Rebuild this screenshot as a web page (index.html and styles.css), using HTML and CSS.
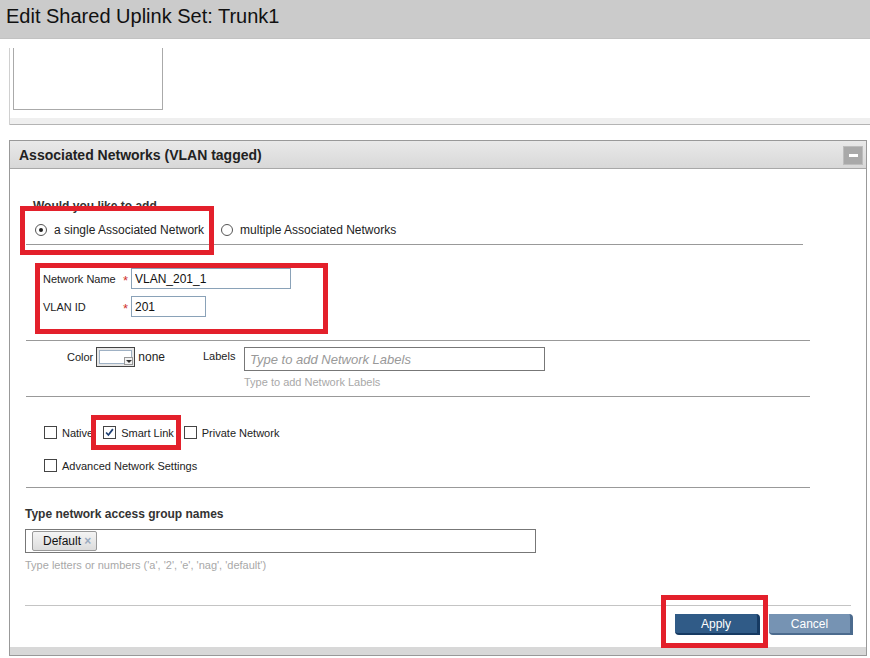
FILE: index.html
```html
<!DOCTYPE html>
<html lang="en">

<head>
    <meta charset="UTF-8">
    <meta name="viewport" content="width=device-width, initial-scale=1.0">
    <title>Edit Shared Uplink Set</title>
    <link rel="stylesheet" href="styles.css">
</head>

<body>

    <div class="page-header">Edit Shared Uplink Set: Trunk1</div>

    <div class="top-panel">
        <div class="preview"></div>
        <div class="strip"></div>
    </div>

    <div class="panel">
        <div class="panel-header">
            <h3>Associated Networks (VLAN tagged)</h3>
            <button class="collapse" type="button"><span></span></button>
        </div>

        <div class="add-choice">
            <div class="add-title">Would you like to add...</div>
            <div class="radio-row">
                <label class="radio"><span class="dot checked"></span>a single Associated Network</label>
                <label class="radio"><span class="dot"></span>multiple Associated Networks</label>
            </div>
        </div>
        <div class="rule short"></div>

        <div class="fields">
            <div class="field-row">
                <label for="netname">Network Name</label>
                <span class="req">*</span>
                <input type="text" id="netname" class="name-input" value="VLAN_201_1">
            </div>
            <div class="field-row">
                <label for="vlanid">VLAN ID</label>
                <span class="req">*</span>
                <input type="text" id="vlanid" class="id-input" value="201">
            </div>
        </div>
        <div class="rule"></div>

        <div class="color-row">
            <div class="color-field">
                <span>Color</span>
                <span class="swatch"><span class="swatch-inner"></span><span class="swatch-arrow"></span></span>
                <span class="none">none</span>
            </div>
            <div class="labels-field">
                <span class="labels-label">Labels</span>
                <div>
                    <input type="text" class="labels-input" placeholder="Type to add Network Labels">
                    <div class="hint">Type to add Network Labels</div>
                </div>
            </div>
        </div>
        <div class="rule"></div>

        <div class="checks">
            <div class="check-row">
                <label class="check"><span class="box"></span>Native</label>
                <label class="check"><span class="box checked"><svg viewBox="0 0 13 13" width="11" height="11"><path d="M2.5 6.5 L5.2 9.5 L10.5 2.5" fill="none" stroke="#1d3f73" stroke-width="2"/></svg></span>Smart Link</label>
                <label class="check"><span class="box"></span>Private Network</label>
            </div>
            <div class="check-row">
                <label class="check"><span class="box"></span>Advanced Network Settings</label>
            </div>
        </div>
        <div class="rule"></div>

        <div class="groups">
            <div class="groups-title">Type network access group names</div>
            <div class="tag-input">
                <span class="tag">Default <span class="tag-x">&times;</span></span>
            </div>
            <div class="hint">Type letters or numbers ('a', '2', 'e', 'nag', 'default')</div>
        </div>
        <div class="rule wide"></div>

        <div class="actions">
            <button type="button" class="btn apply">Apply</button>
            <button type="button" class="btn cancel">Cancel</button>
        </div>

        <div class="panel-foot"></div>
    </div>

    <!-- annotation boxes -->
    <div class="mark mark-add"></div>
    <div class="mark mark-fields"></div>
    <div class="mark mark-smart"></div>
    <div class="mark mark-apply"></div>

</body>

</html>
```

FILE: styles.css
```css
* {
    box-sizing: border-box;
    margin: 0;
    padding: 0;
    font-family: "Liberation Sans", Arial, sans-serif;
}

body {
    width: 870px;
    height: 658px;
    background-color: #fff;
    color: #222;
    position: relative;
    overflow: hidden;
}

.page-header {
    height: 39px;
    padding: 5px 0 0 6px;
    background-color: #cbcbcb;
    border-bottom: 1px solid #c2c2c2;
    font-size: 20px;
    color: #111;
}

.top-panel {
    margin: 9px 0 0 9px;
    border-left: 1px solid #d0d0d0;
}

.preview {
    margin-left: 3px;
    width: 150px;
    height: 62px;
    border: 1px solid #aaa;
    border-top: none;
}

.strip {
    margin-top: 8px;
    height: 7px;
    background-color: #efefef;
    border-bottom: 1px solid #b4b4b4;
}

.panel {
    margin: 15px 0 0 9px;
    width: 858px;
    height: 516px;
    border: 1px solid #999;
}

.panel-header {
    height: 28px;
    padding: 0 3px 0 9px;
    display: flex;
    align-items: center;
    justify-content: space-between;
    background: linear-gradient(#e9e9e9, #d8d8d8);
    border-bottom: 1px solid #a8a8a8;
}

.panel-header h3 {
    font-size: 14px;
    color: #222;
}

.collapse {
    width: 20px;
    height: 19px;
    margin-top: 2px;
    background-color: #a9a9a9;
    border: 1px solid #bdbdbd;
    display: flex;
    align-items: center;
    justify-content: center;
}

.collapse span {
    width: 9px;
    height: 3px;
    background-color: #fff;
}

.add-choice {
    padding: 30px 0 0 23px;
}

.add-title {
    height: 14px;
    line-height: 14px;
    font-size: 12px;
    font-weight: bold;
    color: #333;
}

.radio-row {
    margin-top: 10px;
    height: 14px;
    display: flex;
    gap: 15px;
}

.radio {
    display: flex;
    align-items: center;
    font-size: 12px;
    line-height: 14px;
    color: #222;
}

.dot {
    width: 12px;
    height: 12px;
    margin: 0 7px 0 2px;
    border: 1px solid #555;
    border-radius: 50%;
    background-color: #fff;
    position: relative;
}

.dot.checked::after {
    content: "";
    position: absolute;
    left: 3px;
    top: 3px;
    width: 4px;
    height: 4px;
    border-radius: 50%;
    background-color: #222;
}

.rule {
    margin-left: 16px;
    width: 784px;
    height: 1px;
    background-color: #999;
}

.rule.short {
    margin-top: 7px;
    width: 777px;
}

.rule.wide {
    margin-left: 15px;
    width: 826px;
    background-color: #c4c4c4;
}

.fields {
    padding: 23px 0 23px 33px;
    display: flex;
    flex-direction: column;
    gap: 7px;
}

.field-row {
    display: flex;
    align-items: center;
    height: 21px;
}

.field-row label {
    width: 80px;
    font-size: 11px;
    color: #222;
}

.req {
    width: 8px;
    font-size: 13px;
    line-height: 10px;
    color: #d0332d;
    padding-top: 5px;
}

.field-row input {
    height: 21px;
    padding: 0 3px;
    border: 1px solid #8aa2b8;
    font-size: 12px;
    color: #111;
}

.name-input {
    width: 160px;
}

.id-input {
    width: 75px;
}

.color-row {
    padding: 6px 0 0 57px;
    height: 55px;
    display: flex;
}

.color-field {
    width: 136px;
    height: 20px;
    display: flex;
    align-items: center;
    font-size: 11px;
}

.swatch {
    width: 39px;
    height: 20px;
    margin: 0 3px 0 3px;
    border: 1px solid #444;
    background-color: #e6e6e6;
    position: relative;
}

.swatch-inner {
    position: absolute;
    left: 2px;
    top: 2px;
    width: 33px;
    height: 14px;
    background-color: #fff;
    border: 1px solid #9fb1c4;
}

.swatch-arrow {
    position: absolute;
    right: 1px;
    bottom: 1px;
    width: 9px;
    height: 8px;
    background-color: #f2f2f2;
    border: 1px solid #999;
}

.swatch-arrow::after {
    content: "";
    position: absolute;
    left: 1px;
    top: 2px;
    border-left: 3px solid transparent;
    border-right: 3px solid transparent;
    border-top: 3px solid #333;
}

.none {
    font-size: 12px;
}

.labels-field {
    display: flex;
}

.labels-label {
    width: 41px;
    height: 20px;
    line-height: 18px;
    font-size: 11px;
}

.labels-input {
    width: 301px;
    height: 24px;
    padding: 0 5px;
    border: 1px solid #777;
    font-size: 13px;
}

.labels-input::placeholder {
    font-style: italic;
    color: #999;
}

.hint {
    margin-top: 5px;
    font-size: 11px;
    line-height: 12px;
    color: #a8a8a8;
}

.checks {
    padding: 29px 0 15px 34px;
    display: flex;
    flex-direction: column;
    gap: 20px;
}

.check-row {
    display: flex;
    height: 13px;
}

.check {
    display: flex;
    align-items: center;
    font-size: 11px;
    color: #222;
    margin-right: 10px;
}

.box {
    width: 13px;
    height: 13px;
    margin-right: 5px;
    border: 1px solid #444;
    background-color: #fff;
    display: flex;
    align-items: center;
    justify-content: center;
}

.groups {
    padding: 19px 0 0 15px;
    height: 117px;
}

.groups-title {
    height: 14px;
    line-height: 14px;
    font-size: 12px;
    font-weight: bold;
    color: #333;
}

.tag-input {
    margin-top: 8px;
    width: 511px;
    height: 24px;
    padding: 1px 0 0 6px;
    border: 1px solid #777;
}

.tag {
    display: inline-block;
    height: 20px;
    width: 65px;
    padding-left: 10px;
    line-height: 18px;
    font-size: 12px;
    color: #111;
    background: linear-gradient(#f4f4f4, #dcdcdc);
    border: 1px solid #999;
    border-radius: 2px;
}

.tag-x {
    color: #9aabc0;
    font-weight: bold;
}

.groups .hint {
    margin-top: 6px;
}

.actions {
    margin-top: 8px;
    padding-right: 13px;
    display: flex;
    justify-content: flex-end;
    gap: 9px;
}

.btn {
    width: 85px;
    height: 21px;
    border: none;
    border-right: 3px solid;
    border-bottom: 2px solid;
    border-top-right-radius: 4px;
    border-bottom-left-radius: 4px;
    font-size: 12px;
    color: #fff;
}

.apply {
    background-color: #305b87;
    border-color: #163a62;
}

.cancel {
    width: 84px;
    background-color: #7693b3;
    border-color: #4c6b8e;
}

.panel-foot {
    margin-top: 12px;
    height: 8px;
    background-color: #d8d8d8;
}

.mark {
    position: absolute;
    border: 5px solid #e3202b;
}

.mark-add {
    left: 20px;
    top: 206px;
    width: 194px;
    height: 49px;
}

.mark-fields {
    left: 35px;
    top: 263px;
    width: 293px;
    height: 71px;
}

.mark-smart {
    left: 91px;
    top: 415px;
    width: 90px;
    height: 35px;
}

.mark-apply {
    left: 661px;
    top: 595px;
    width: 107px;
    height: 53px;
}
```
